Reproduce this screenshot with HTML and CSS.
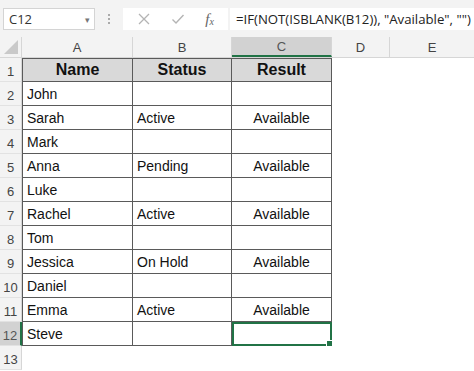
FILE: index.html
```html
<!DOCTYPE html>
<html>
<head>
<meta charset="utf-8">
<link rel="stylesheet" href="styles.css">
</head>
<body>
<div class="app">
  <div class="toolbar">
    <div class="namebox"><span class="nb-text">C12</span><span class="nb-arrow">&#9662;</span></div>
    <div class="dots"><span></span><span></span><span></span></div>
    <div class="btns">
      <svg class="ico" width="14" height="14" viewBox="0 0 14 14"><path d="M2 2L12 12M12 2L2 12" stroke="#b4b4b4" stroke-width="1.3" fill="none"/></svg>
      <svg class="ico" width="14" height="14" viewBox="0 0 14 14"><path d="M1.5 7.5L5 11L12.5 3" stroke="#b4b4b4" stroke-width="1.4" fill="none"/></svg>
      <span class="fx">f<sub>x</sub></span>
    </div>
    <div class="formula">=IF(NOT(ISBLANK(B12)), "Available", "")</div>
  </div>
  <div class="sheet">
    <div class="corner"><svg width="14" height="14" viewBox="0 0 14 14"><path d="M14 0L14 14L0 14Z" fill="#c9c9c9"/></svg></div>
    <div class="colh">A</div>
    <div class="colh">B</div>
    <div class="colh sel">C</div>
    <div class="colh">D</div>
    <div class="colh last">E</div>
  </div>
  <div class="grid" id="grid"></div>
</div>
<script src="app.js"></script>
</body>
</html>
```
FILE: app.js
```js
const rows = [
  ["Name","Status","Result"],
  ["John","",""],
  ["Sarah","Active","Available"],
  ["Mark","",""],
  ["Anna","Pending","Available"],
  ["Luke","",""],
  ["Rachel","Active","Available"],
  ["Tom","",""],
  ["Jessica","On Hold","Available"],
  ["Daniel","",""],
  ["Emma","Active","Available"],
  ["Steve","",""]
];
const g = document.getElementById('grid');
let html = '';
rows.forEach((r, i) => {
  const n = i + 1;
  const head = i === 0 ? ' head' : '';
  html += `<div class="rowh${n === 12 ? ' sel' : ''}">${n}</div>`;
  html += `<div class="cell a${head}">${r[0]}</div>`;
  html += `<div class="cell b${head}">${r[1]}</div>`;
  html += `<div class="cell c${head}${n === 12 ? ' active' : ''}">${r[2]}${n === 12 ? '<span class="handle"></span>' : ''}</div>`;
  html += `<div class="blank"></div><div class="blank"></div>`;
});
html += `<div class="rowh">13</div><div class="blank"></div><div class="blank"></div><div class="blank"></div><div class="blank"></div><div class="blank"></div>`;
g.innerHTML = html;
```
FILE: styles.css
```css
html, body { margin: 0; padding: 0; background: #fff; }
body { width: 474px; height: 371px; overflow: hidden; font-family: "Liberation Sans", Arial, sans-serif; }
.app { width: 474px; }
.toolbar {
  height: 37px;
  background: #f3f3f3;
  display: flex;
  align-items: flex-start;
  padding-top: 8px;
  box-sizing: border-box;
}
.namebox {
  margin-left: 3px;
  width: 92px;
  height: 22px;
  box-sizing: border-box;
  background: #fff;
  border: 1px solid #d4d4d4;
  display: flex;
  align-items: center;
  justify-content: space-between;
  padding: 0 4px 0 5px;
  font-family: "Open Sans", "Noto Sans", sans-serif;
  font-size: 13px;
  color: #333;
}
.nb-arrow { font-size: 9px; color: #777; }
.dots { width: 28px; height: 22px; display: flex; flex-direction: column; align-items: center; justify-content: center; gap: 2px; }
.dots span { width: 2px; height: 2px; background: #aaa; }
.btns {
  width: 105px;
  height: 22px;
  background: #fff;
  display: flex;
  align-items: center;
  justify-content: space-around;
  padding: 0 4px;
  box-sizing: border-box;
}
.fx { font-family: "Liberation Serif", serif; font-style: italic; font-size: 15px; color: #666; }
.fx sub { font-size: 10px; vertical-align: -1px; }
.formula {
  margin-left: 2px;
  flex: 1;
  height: 22px;
  background: #fff;
  display: flex;
  align-items: center;
  padding-left: 6px;
  font-family: "Open Sans", "Noto Sans", sans-serif;
  font-size: 13.2px;
  color: #222;
  white-space: nowrap;
}
.sheet {
  display: grid;
  grid-template-columns: 22px 111px 99px 100px 58px 84px;
  height: 20px;
  background: #f3f3f3;
  border-bottom: 1px solid #d6d6d6;
}
.corner { display: flex; align-items: flex-end; justify-content: flex-end; padding: 0 3px 3px 0; border-right: 1px solid #d6d6d6; }
.colh {
  display: flex; align-items: center; justify-content: center;
  font-size: 13px; color: #444;
  border-right: 1px solid #d6d6d6;
}
.colh.last { border-right: none; }
.colh.sel { background: #d2d2d2; border-bottom: 2px solid #217346; color: #555; }
.grid {
  display: grid;
  grid-template-columns: 22px 111px 99px 100px 58px 84px;
  grid-auto-rows: 24px;
}
.rowh {
  background: #f3f3f3;
  border-right: 1px solid #d6d6d6;
  border-bottom: 1px solid #e2e2e2;
  display: flex; align-items: center; justify-content: center;
  font-size: 13px; color: #444;
  padding-top: 3px;
  box-sizing: border-box;
}
.rowh.sel { background: #d2d2d2; border-right: 2px solid #217346; color: #555; }
.cell {
  box-sizing: border-box;
  border-right: 1px solid #5a5a5a;
  border-bottom: 1px solid #5a5a5a;
  display: flex; align-items: center;
  font-size: 14px; color: #111;
  padding-left: 4px;
  position: relative;
}
.cell.a { border-left: 1px solid #5a5a5a; }
.cell.c { justify-content: center; padding-left: 0; }
.cell.head { background: #d9d9d9; font-weight: bold; font-size: 16px; justify-content: center; padding-left: 0; border-top: 1px solid #5a5a5a; }
.cell.active { border: 2px solid #217346; }
.handle { position: absolute; right: -3px; bottom: -3px; width: 5px; height: 5px; background: #217346; border: 1px solid #fff; }
```
